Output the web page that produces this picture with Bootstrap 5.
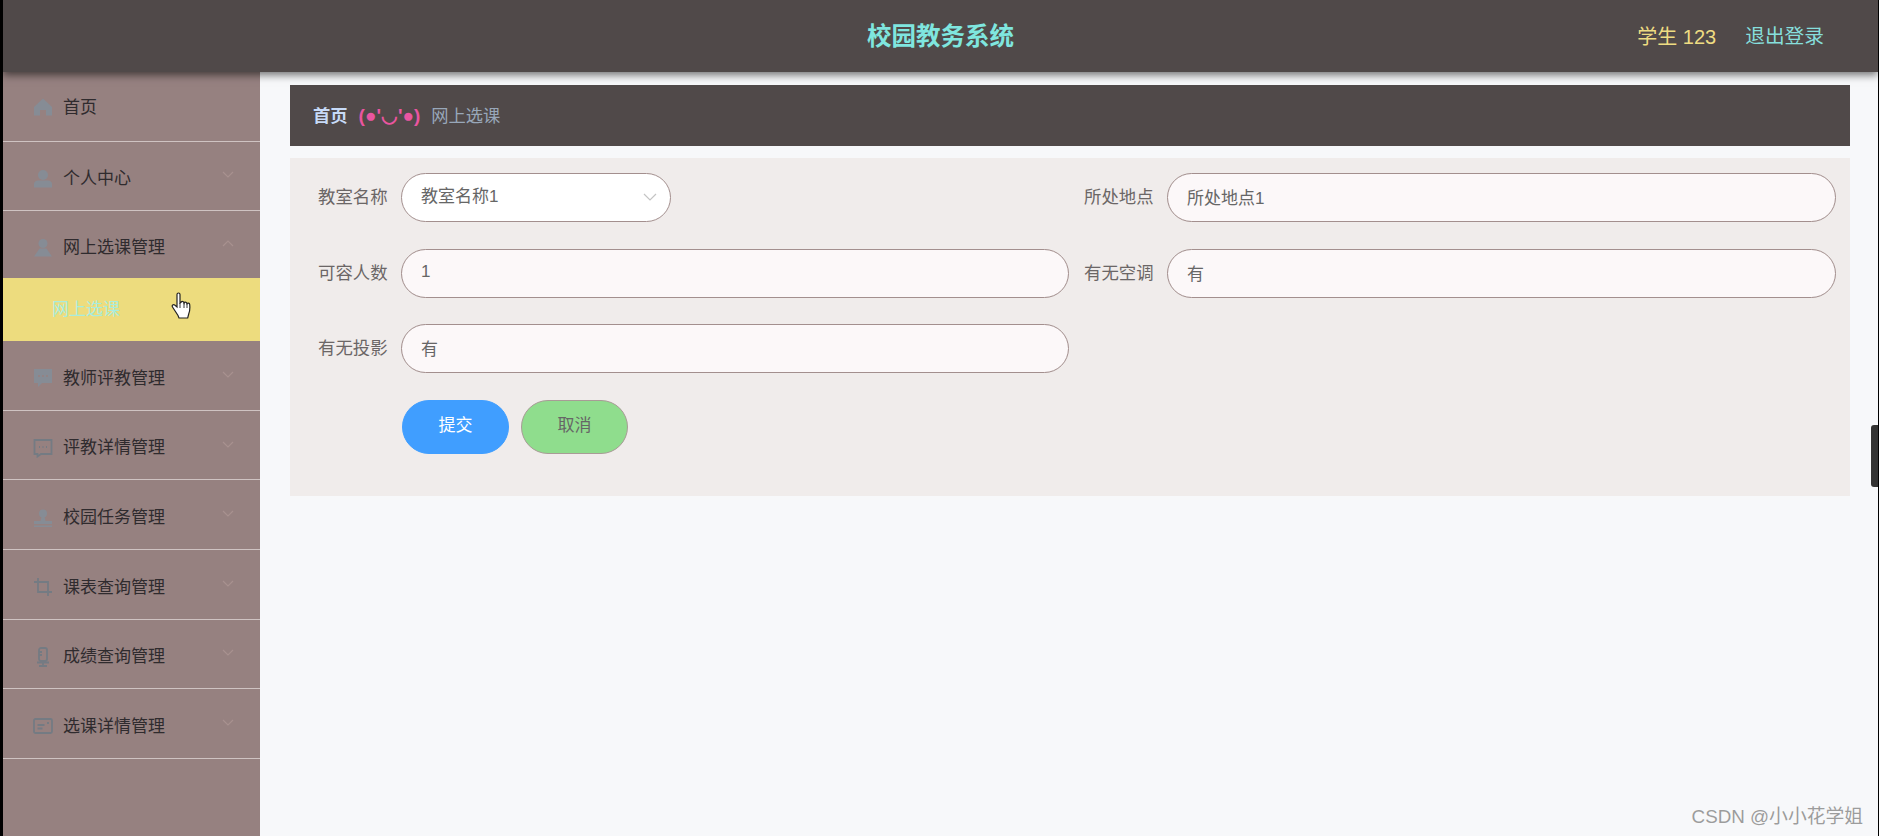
<!DOCTYPE html>
<html lang="zh">
<head>
<meta charset="utf-8">
<title>校园教务系统</title>
<link href="https://cdn.jsdelivr.net/npm/bootstrap@5.3.0/dist/css/bootstrap.min.css" rel="stylesheet">
<style>
html,body{height:836px;overflow:hidden}
body{background:#000;padding:0 1px 0 3px;font-family:"Liberation Sans","Noto Sans CJK SC",sans-serif;font-size:17px;color:#666}
.app-shell{position:relative;height:836px;background:#f7f8fa;overflow:hidden}
.top-bar{display:grid;grid-template-columns:1fr auto 1fr;align-items:center;height:72px;background:#504949;box-shadow:0 3px 8px rgba(0,0,0,.55);position:relative;z-index:2}
.top-title{font-size:24.5px;font-weight:700;color:#7fe6df;line-height:1;padding-top:3px}
.top-user{font-size:20px;color:#eedc82}
.top-out{font-size:19.7px;color:#86dfdc;text-decoration:none}
.top-right{justify-self:end;gap:29px;padding:2px 54px 0 0}
.side-menu{width:257px;height:764px;background:#968180;flex:none}
.menu-row{height:69.6px;border-bottom:1.5px solid #cfc3c2;padding:6px 26px 0 30px;color:#2f2b2e;font-size:17px}
.menu-row.row-first{padding-top:2px}
.menu-row.is-open{height:67px;border-bottom:0;padding-top:6px}
.menu-row svg.ico{width:20px;height:20px;flex:none;fill:#868c95;margin-right:10px}
.menu-row svg.ico.ln{fill:none;stroke:#747b83;stroke-width:1.8}
.menu-arrow{width:12px;height:7px;fill:none;stroke:#a8918f;stroke-width:1.2;margin-bottom:8px}
.menu-sub{height:63px;background:#eddc7e;color:#a9ecdd;padding-left:49px;position:relative;font-size:17px}
.hand-cursor{position:absolute;left:168px;top:14px;width:22px;height:28px}
.page-area{padding:13px 28px 0 30px}
.crumb-bar{height:61px;background:#504949;padding:2px 23px 0;margin-bottom:12px;gap:11px;font-size:17.3px}
.crumb-home{color:#c7daf7;font-weight:700}
.crumb-sep{color:#ea55a0;font-weight:700;font-size:19px}
.crumb-now{color:#98a7b9}
.form-panel{height:338px;background:#f0eceb;padding:15px 14px 0 28px}
.form-cols{display:grid;grid-template-columns:751px 1fr;column-gap:15px;row-gap:26.5px}
.field-line{display:flex;align-items:center;gap:12px;height:49px}
.field-line label{width:71px;flex:none;font-size:17.4px;color:#6b6666;white-space:nowrap}
.field-line .form-control,.field-line .form-select{height:49px;border-radius:25px;border:1px solid #a38f8e;background-color:#fcf8f9;padding:0 19px 2px;font-size:17px;color:#666;box-shadow:none}
.field-line .form-select{width:270px;flex:none;background-color:#fff;background-size:14px 9px;background-position:right 13px center;background-image:url("data:image/svg+xml,%3csvg xmlns='http://www.w3.org/2000/svg' viewBox='0 0 14 9'%3e%3cpath fill='none' stroke='%23c4c4c4' stroke-width='1.2' d='M1 1l6 6 6-6'/%3e%3c/svg%3e")}
.btn-line{padding:27px 0 0 84px;gap:12px;display:flex}
.btn-line .btn{width:107px;height:54px;font-size:17px;padding:0 0 2px}
.btn-go{background:#409eff;border:1px solid #409eff;color:#fff}
.btn-no{background:#8fdd8d;border:1px solid #a89c96;color:#666}
.scroll-grip{position:absolute;right:0;top:425px;width:7px;height:62px;background:#333;border-radius:3px 0 0 3px}
.mark-csdn{position:absolute;right:15px;bottom:7px;font-size:18.8px;line-height:24px;color:#9c9c9c;text-shadow:0 0 1px #fff}
</style>
</head>
<body>
<div class="app-shell">
  <header class="top-bar">
    <div></div>
    <div class="top-title">校园教务系统</div>
    <div class="top-right d-flex align-items-center">
      <span class="top-user">学生 123</span>
      <a class="top-out" href="#">退出登录</a>
    </div>
  </header>
  <div class="d-flex">
    <nav class="side-menu">
      <div class="menu-row row-first d-flex align-items-center">
        <svg class="ico" viewBox="0 0 20 20"><path d="M10 1.500 1 10v8.500h6V13h6v5.500h6V10z"/></svg><span>首页</span>
      </div>
      <div class="menu-row d-flex align-items-center">
        <svg class="ico" viewBox="0 0 20 20"><circle cx="10" cy="6" r="5"/><path d="M1 15c0-2 2-3.500 4-3.500h10c2 0 4 1.500 4 3.500v3.500H1z"/></svg><span>个人中心</span>
        <svg class="menu-arrow ms-auto" viewBox="0 0 12 7"><path d="M1 1l5 5 5-5"/></svg>
      </div>
      <div class="menu-row is-open d-flex align-items-center">
        <svg class="ico" viewBox="0 0 20 20"><circle cx="10" cy="5.500" r="4.500"/><path d="M6.500 10.500h7L19 18.500H1z"/></svg><span>网上选课管理</span>
        <svg class="menu-arrow ms-auto" viewBox="0 0 12 7"><path d="M1 6l5-5 5 5"/></svg>
      </div>
      <div class="menu-sub d-flex align-items-center">
        <span>网上选课</span>
        <svg class="hand-cursor" viewBox="0 0 22 28"><path d="M6 2.500c0-2 3-2 3 0V11l1-.5c0-1.500 2.500-1.500 2.800 0l.2.500c.3-1.300 2.500-1.300 2.800.3l.2.500c.5-1 2.500-.8 2.700.7.300 3 .1 7-1 9.500l-1 4H8l-1-2.500L1.500 15c-1-1.500.8-3 2.200-2L6 15z" fill="#fff" stroke="#222" stroke-width="1.200"/><path d="M9 11v5M13 11v5M16 12v4" stroke="#222" stroke-width=".9" fill="none"/></svg>
      </div>
      <div class="menu-row d-flex align-items-center">
        <svg class="ico" viewBox="0 0 20 20"><path d="M1 1h18v14H9l-4 4v-4H1z"/><g fill="#968180"><circle cx="6" cy="8" r="1"/><circle cx="10" cy="8" r="1"/><circle cx="14" cy="8" r="1"/></g></svg><span>教师评教管理</span>
        <svg class="menu-arrow ms-auto" viewBox="0 0 12 7"><path d="M1 1l5 5 5-5"/></svg>
      </div>
      <div class="menu-row d-flex align-items-center">
        <svg class="ico ln" viewBox="0 0 20 20"><path d="M1.500 2h17v14H8l-3.500 2.500V16h-3z"/><path d="M6 9h1M9.500 9h1M13 9h1"/></svg><span>评教详情管理</span>
        <svg class="menu-arrow ms-auto" viewBox="0 0 12 7"><path d="M1 1l5 5 5-5"/></svg>
      </div>
      <div class="menu-row d-flex align-items-center">
        <svg class="ico" viewBox="0 0 20 20"><circle cx="10" cy="5.500" r="4"/><path d="M8.500 9h3l1 4H19v3H1v-3h6.500z"/><path d="M1 17.500h18V19H1z"/></svg><span>校园任务管理</span>
        <svg class="menu-arrow ms-auto" viewBox="0 0 12 7"><path d="M1 1l5 5 5-5"/></svg>
      </div>
      <div class="menu-row d-flex align-items-center">
        <svg class="ico ln" viewBox="0 0 20 20"><path d="M5 1v14h14M1 5h14v14"/></svg><span>课表查询管理</span>
        <svg class="menu-arrow ms-auto" viewBox="0 0 12 7"><path d="M1 1l5 5 5-5"/></svg>
      </div>
      <div class="menu-row d-flex align-items-center">
        <svg class="ico ln" viewBox="0 0 20 20"><rect x="6" y="1" width="8" height="13" rx="2"/><path d="M6 5h3M6 8h3M4 15.500h12M10 15.500V19M6 19h8"/></svg><span>成绩查询管理</span>
        <svg class="menu-arrow ms-auto" viewBox="0 0 12 7"><path d="M1 1l5 5 5-5"/></svg>
      </div>
      <div class="menu-row d-flex align-items-center">
        <svg class="ico ln" viewBox="0 0 20 20"><rect x="1" y="3" width="18" height="14" rx="1.500"/><path d="M4.500 9h7M4.500 12.500h5M14 7h2"/></svg><span>选课详情管理</span>
        <svg class="menu-arrow ms-auto" viewBox="0 0 12 7"><path d="M1 1l5 5 5-5"/></svg>
      </div>
    </nav>
    <main class="page-area flex-grow-1">
      <div class="crumb-bar d-flex align-items-center">
        <span class="crumb-home">首页</span>
        <span class="crumb-sep">(●'◡'●)</span>
        <span class="crumb-now">网上选课</span>
      </div>
      <form class="form-panel">
        <div class="form-cols">
          <div class="field-line">
            <label>教室名称</label>
            <select class="form-select"><option>教室名称1</option></select>
          </div>
          <div class="field-line">
            <label>所处地点</label>
            <input class="form-control" value="所处地点1">
          </div>
          <div class="field-line">
            <label>可容人数</label>
            <input class="form-control" value="1">
          </div>
          <div class="field-line">
            <label>有无空调</label>
            <input class="form-control" value="有">
          </div>
          <div class="field-line">
            <label>有无投影</label>
            <input class="form-control" value="有">
          </div>
        </div>
        <div class="btn-line">
          <button type="button" class="btn btn-go rounded-pill">提交</button>
          <button type="button" class="btn btn-no rounded-pill">取消</button>
        </div>
      </form>
    </main>
  </div>
  <div class="scroll-grip"></div>
  <div class="mark-csdn">CSDN @小小花学姐</div>
</div>
</body>
</html>
